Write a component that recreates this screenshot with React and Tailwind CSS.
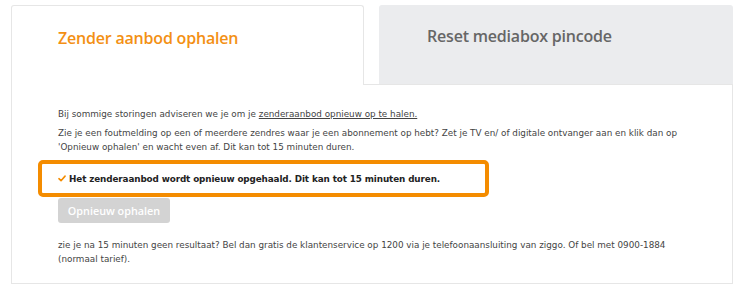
import React from "react";

export default function App() {
  return (
    <div className="w-[742px] h-[294px] bg-white pt-[5px] pl-[11px]">
      <div className="w-[722px]">
        <div className="flex gap-[15px] relative z-10">
          <div className="w-[353px] h-[80px] -mb-px bg-white border border-b-0 border-[#e6e6e6] rounded-t-[3px] pl-[46px] pt-[20px]">
            <span className="font-['Open_Sans',sans-serif] font-semibold text-[16px] text-[#f39014] tracking-[-0.2px]">
              Zender aanbod ophalen
            </span>
          </div>
          <div className="w-[354px] h-[79px] bg-[#ebecee] rounded-t-[3px] pl-[48px] pt-[19px]">
            <span className="font-['Open_Sans',sans-serif] font-semibold text-[16px] text-[#666666] tracking-[-0.2px]">
              Reset mediabox pincode
            </span>
          </div>
        </div>
        <div className="h-[200px] border border-[#e6e6e6] pl-[46px] pr-[20px] pt-[22px] font-['DejaVu_Sans',Verdana,sans-serif] text-[8.8px] leading-[14px] text-[#444]">
          <p>
            Bij sommige storingen adviseren we je om je{" "}
            <span className="underline">zenderaanbod opnieuw op te halen.</span>
          </p>
          <p className="mt-[5px]">
            Zie je een foutmelding op een of meerdere zendres waar je een abonnement op hebt? Zet je TV en/ of digitale ontvanger aan en klik dan op<br />
            'Opnieuw ophalen' en wacht even af. Dit kan tot 15 minuten duren.
          </p>
          <div className="-ml-[20px] mt-[6px] w-[451px] h-[37px] border-[4px] border-[#f48c00] rounded-[5px] pl-[16px] flex items-center gap-[3px] font-bold text-[#222]">
            <svg width="8" height="7" viewBox="0 0 9 8" className="shrink-0">
              <path d="M1 4.2 L3.4 6.5 L8 1.3" stroke="#f48c00" strokeWidth="1.8" fill="none" strokeLinecap="round" strokeLinejoin="round" />
            </svg>
            <span className="tracking-[-0.1px]">Het zenderaanbod wordt opnieuw opgehaald. Dit kan tot 15 minuten duren.</span>
          </div>
          <div className="mt-px w-[112px] h-[25px] rounded-[3px] bg-[#d3d3d3] flex items-center justify-center font-['Open_Sans',sans-serif] font-semibold text-[10.8px] text-white">
            Opnieuw ophalen
          </div>
          <p className="mt-[16px] leading-[13.5px]">
            zie je na 15 minuten geen resultaat? Bel dan gratis de klantenservice op 1200 via je telefoonaansluiting van ziggo. Of bel met 0900-1884<br />
            (normaal tarief).
          </p>
        </div>
      </div>
    </div>
  );
}
